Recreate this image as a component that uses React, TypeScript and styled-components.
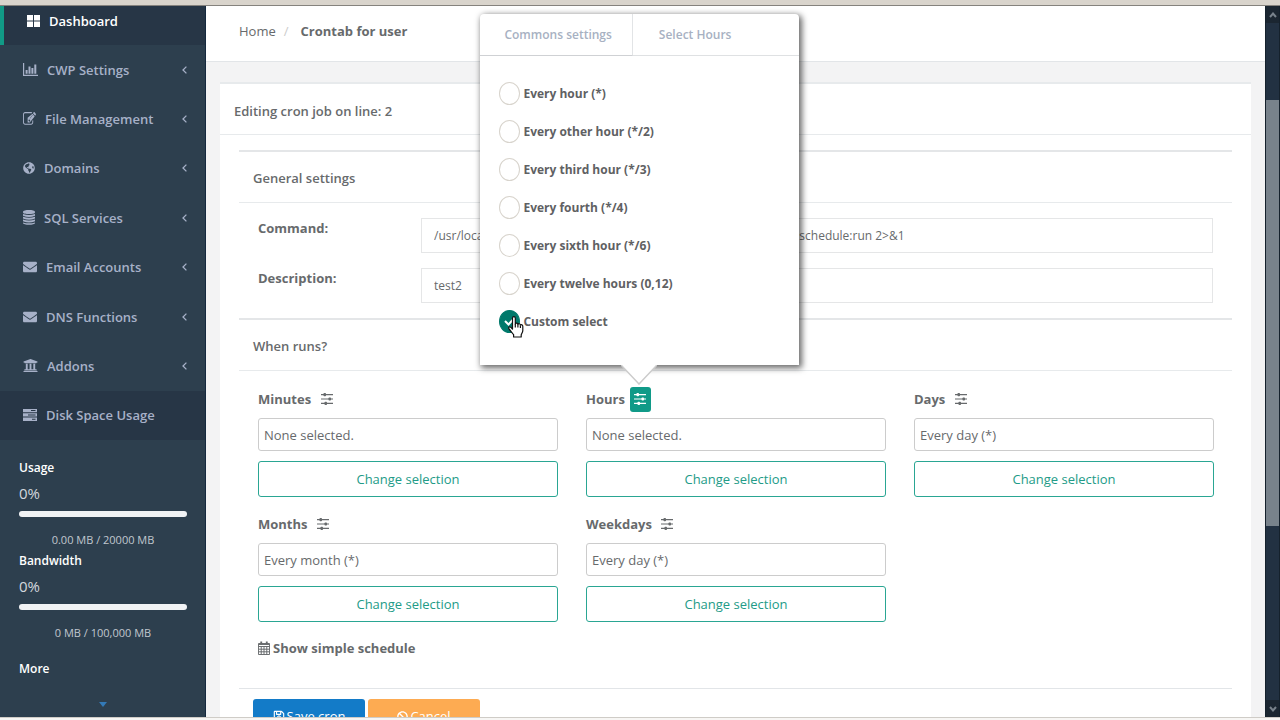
import React from "react";
import styled, { createGlobalStyle, css } from "styled-components";
import { FaEnvelope, FaUniversity, FaGlobeAmericas, FaBan, FaRegSave } from "react-icons/fa";

const GlobalStyle = createGlobalStyle`
  * { box-sizing: border-box; }
  body { margin: 0; }
  body, button, input {
    font-family: "Open Sans", "Noto Sans", sans-serif;
    font-size: 13px;
    color: #676a6c;
  }
`;

const Window = styled.div`
  display: flex;
  flex-direction: column;
  height: 100vh;
  overflow: hidden;
  background: #f3f3f4;
`;
const TopEdge = styled.div`
  flex: none;
  height: 6px;
  background: #d9d4cc;
  border-bottom: 1px solid #85827d;
`;
const BottomEdge = styled.div`
  flex: none;
  position: relative;
  height: 3px;
  background: #f7f6f4;
  border-top: 1px solid #cfccc7;
`;
const Viewport = styled.div`
  display: flex;
  flex: 1;
  min-height: 0;
  overflow: hidden;
`;

/* Sidebar */
const Sidebar = styled.aside`
  flex: none;
  width: 206px;
  overflow: hidden;
  background: #2d3f4e;
  border-right: 1px solid #15293e;
`;
const Nav = styled.nav`
  display: grid;
  grid-template-rows: 39px;
  grid-auto-rows: 1fr;
  height: 434px;
`;
const NavLink = styled.a<{ $state?: "active" | "shaded" }>`
  display: flex;
  align-items: center;
  gap: 9px;
  padding: 0 18px 0 23px;
  color: #a7b1c8;
  font-weight: 600;
  text-decoration: none;
  svg { flex: none; }
  ${(p) => p.$state && css`background: #273646;`}
  ${(p) => p.$state === "active" && css`
    color: #fff;
    border-left: 4px solid #119a86;
    padding-bottom: 10px;
  `}
`;
const NavText = styled.span`
  flex: 1;
  white-space: nowrap;
`;
const Quota = styled.section`
  padding: 17px 18px 0 19px;
  & + & { padding-top: 0; }
`;
const QuotaTitle = styled.h4`
  margin: 0;
  font-size: 12px;
  line-height: 22px;
  font-weight: 600;
  color: #fff;
`;
const QuotaValue = styled.div`
  font-size: 15px;
  line-height: 28px;
  color: #d2d7dd;
`;
const Meter = styled.div`
  height: 6px;
  margin: 4px 0 13px;
  border-radius: 3px;
  background: #f1f3f5;
`;
const QuotaDetail = styled.div`
  font-size: 11px;
  line-height: 20px;
  text-align: center;
  color: #c0c7cf;
`;
const More = styled.div`
  padding: 15px 18px 0 19px;
`;
const MoreCaret = styled.button`
  display: block;
  margin: 22px auto 0;
  padding: 0;
  border: 0;
  background: none;
  line-height: 0;
`;

/* Main column */
const Main = styled.main`
  flex: 1;
  min-width: 0;
`;
const PageHead = styled.header`
  height: 56px;
  padding: 15px 33px 0;
  background: #fff;
  border-bottom: 1px solid #e2e5e8;
`;
const Crumbs = styled.ol`
  display: flex;
  margin: 0;
  padding: 0;
  list-style: none;
  line-height: 20px;
  a { color: inherit; text-decoration: none; }
  li + li::before { content: "/"; padding: 0 12px 0 8px; color: #ccc; font-weight: 400; }
`;
const Current = styled.li`
  font-weight: 700;
`;
const Card = styled.section`
  margin: 20px 14px 0;
  background: #fff;
  border-top: 2px solid #e7eaec;
`;
const CardTitle = styled.h2`
  margin: 0;
  padding: 4px 14px 0;
  font-size: 13px;
  line-height: 46px;
  font-weight: 600;
  border-bottom: 1px solid #e7eaec;
`;
const CardBody = styled.form`
  padding: 15px 19px 0;
`;
const SectionTitle = styled.h3`
  margin: 0;
  padding: 2px 14px 0;
  font-size: 13px;
  line-height: 48px;
  font-weight: 600;
  border-top: 2px solid #e4e6e8;
  border-bottom: 1px solid #e7eaec;
`;
const Fields = styled.div`
  display: grid;
  gap: 15px;
  padding: 15px 19px;
`;
const FieldRow = styled.div`
  display: grid;
  grid-template-columns: 163px 1fr;
  label { font-weight: 700; line-height: 20px; }
`;
const TextInput = styled.input`
  width: 100%;
  height: 35px;
  padding: 0 12px;
  border: 1px solid #e5e6e7;
  background: #fff;
  font-size: 12px;
`;
const Schedule = styled.div`
  display: grid;
  grid-template-columns: repeat(3, 1fr);
  gap: 15px 28px;
  padding: 16px 18px 0 19px;
`;
const Unit = styled.div``;
const UnitHead = styled.div`
  display: flex;
  align-items: center;
  gap: 5px;
  height: 24px;
  font-weight: 700;
`;
const TunerSpot = styled.div`
  position: relative;
  display: flex;
`;
const Tuner = styled.button<{ $on?: boolean }>`
  display: flex;
  align-items: center;
  justify-content: center;
  width: 21px;
  height: 25px;
  padding: 0;
  border: 0;
  border-radius: 3px;
  background: ${(p) => (p.$on ? "#109a88" : "none")};
  color: ${(p) => (p.$on ? "#fff" : "#676a6c")};
`;
const Summary = styled.input`
  display: block;
  width: 100%;
  height: 33px;
  margin: 7px 0 10px;
  padding: 0 5px;
  border: 1px solid #ccc;
  border-radius: 3px;
  background: #fff;
`;
const ChangeButton = styled.button`
  display: block;
  width: 100%;
  height: 36px;
  border: 1px solid #2aa693;
  border-radius: 3px;
  background: #fff;
  color: #239b87;
`;
const SimpleLink = styled.a`
  display: flex;
  align-items: center;
  gap: 3px;
  margin: 16px 19px 30px;
  line-height: 20px;
  font-weight: 700;
  color: inherit;
  text-decoration: none;
`;
const Actions = styled.div`
  display: flex;
  gap: 3px;
  padding: 10px 14px;
  border-top: 1px solid #e2e5e8;
`;
const ActionButton = styled.button<{ $tone: string }>`
  display: flex;
  align-items: center;
  justify-content: center;
  gap: 2px;
  width: 112px;
  height: 34px;
  padding: 0;
  border: 0;
  border-radius: 3px;
  background: ${(p) => p.$tone};
  color: #fff;
`;

/* Popover */
const Popover = styled.div`
  position: absolute;
  z-index: 2;
  left: 50%;
  bottom: 47px;
  width: 319px;
  height: 351px;
  margin-left: -160px;
  border-radius: 4px 4px 0 0;
  background: #fff;
  box-shadow: 2px 2px 6px 1px rgba(0, 0, 0, 0.6);
  font-size: 12px;
`;
const Pointer = styled.svg`
  position: absolute;
  top: 100%;
  left: 141px;
`;
const Tabs = styled.div`
  display: flex;
  height: 42px;
  border-bottom: 1px solid #dfe1e3;
`;
const Tab = styled.button<{ $on?: boolean }>`
  padding: 0 26px;
  border: 0;
  background: none;
  color: #a7b1c2;
  font-size: 12px;
  font-weight: 600;
  ${(p) => p.$on && css`
    height: 42px;
    padding: 0 20px 0 24px;
    border-right: 1px solid #e2e4e6;
    border-bottom: 1px solid #cfd1d4;
  `}
`;
const Options = styled.div`
  display: grid;
  gap: 15px;
  padding: 26px 19px;
`;
const Option = styled.label`
  display: flex;
  align-items: center;
  gap: 3px;
  height: 23px;
  font-weight: 700;
  white-space: nowrap;
  color: #5f6163;
`;
const RadioBox = styled.span`
  position: relative;
  display: flex;
`;
const Radio = styled.input`
  appearance: none;
  width: 21px;
  height: 23px;
  margin: 0;
  border: 1px solid #d8d4cd;
  border-radius: 50%;
  background: #fff;
  &:checked { background: #00796b; border-color: #00796b; }
`;
const Tick = styled.svg`
  position: absolute;
  left: 5px;
  top: 7px;
`;
const Hand = styled.svg`
  position: absolute;
  left: 9px;
  top: 6px;
`;

/* Scroll bar of the window */
const ScrollTrack = styled.div`
  flex: none;
  display: flex;
  flex-direction: column;
  align-items: center;
  width: 15px;
  background: #223142;
  border-left: 1px solid #15212c;
  border-right: 1px solid #15212c;
`;
const ScrollEnd = styled.div`
  display: flex;
  align-items: center;
  justify-content: center;
  width: 100%;
  height: 17px;
  background: #1b2631;
`;
const ScrollSpace = styled.div<{ $grow: number }>`
  flex: ${(p) => p.$grow} 0 0;
`;
const ScrollThumb = styled.div`
  flex: 426 0 0;
  width: 100%;
  background: #78828b;
`;

const DashIcon = () => (
  <svg width="13" height="12" viewBox="0 0 13 12" fill="currentColor">
    <path d="M0 0h6v5.5H0zM7 0h6v5.5H7zM0 6.5h6V12H0zM7 6.5h6V12H7z" />
  </svg>
);
const ChartIcon = () => (
  <svg width="15" height="13" viewBox="0 0 15 13" fill="currentColor">
    <path d="M0 0h1.200v11.800H15V13H0zM2.600 7h2v3.800h-2zM5.500 3.500h2v7.300h-2zM8.400 5h2v5.800h-2zM11.300 1.500h2v9.300h-2z" />
  </svg>
);
const EditIcon = () => (
  <svg width="13" height="14" viewBox="0 128 1792 1536" fill="currentColor" preserveAspectRatio="none">
    <path d="M888 1184l116-116-152-152-116 116v56h96v96h56zm440-720q-16-16-33 1l-350 350q-17 17-1 33t33-1l350-350q17-17 1-33zm80 594v190q0 119-84.500 203.500T1120 1536H288q-119 0-203.500-84.500T0 1248V416q0-119 84.500-203.500T288 128h832q63 0 117 25 15 7 18 23 3 17-9 29l-49 49q-14 14-32 8-23-6-45-6H288q-66 0-113 47t-47 113v832q0 66 47 113t113 47h832q66 0 113-47t47-113v-126q0-13 9-22l64-64q15-15 35-7t20 29zm-96-738l288 288-672 672H640V768zm444 132l-92 92-288-288 92-92q28-28 68-28t68 28l152 152q28 28 28 68t-28 68z" />
  </svg>
);
const DatabaseIcon = () => (
  <svg width="12" height="15" viewBox="0 0 12 15" fill="currentColor">
    <path d="M0 2C0-.6 12-.6 12 2v.6c0 2-12 2-12 0zM0 4q6 1.800 12 0v1.700q-6 2.600-12 0zM0 6.800q6 1.800 12 0v1.700q-6 2.600-12 0zM0 9.600q6 1.800 12 0v1.700q-6 2.600-12 0zM0 12.400q6 1.800 12 0v.6c0 2.400-12 2.400-12 0z" />
  </svg>
);
const ServerIcon = () => (
  <svg width="14" height="12" viewBox="0 0 14 12" fill="currentColor">
    <path fillRule="evenodd" d="M0 0h14v3.300H0zM8 1.100v1h4.500v-1zM0 4.300h14v3.300H0zM5 5.400v1h7.500v-1zM0 8.600h14V12H0zM9 9.800v1h3.500v-1z" />
  </svg>
);
const ChevronIcon = () => (
  <svg width="5" height="8" viewBox="0 0 5 8" fill="none" stroke="currentColor" strokeWidth="1.300">
    <path d="M4.400 .6L1 4l3.400 3.400" />
  </svg>
);
const TuneIcon = () => (
  <svg width="12" height="12" viewBox="0 0 12 12" fill="currentColor">
    <path d="M0 1h12v1.200H0zM0 5.400h12v1.200H0zM0 9.800h12V11H0z" />
    <rect x="2.500" y="0" width="2.500" height="3.200" rx=".8" />
    <rect x="7.500" y="4.400" width="2.500" height="3.200" rx=".8" />
    <rect x="3.500" y="8.800" width="2.500" height="3.200" rx=".8" />
  </svg>
);
const CalendarIcon = () => (
  <svg width="12" height="14" viewBox="0 0 13 14" fill="none" stroke="currentColor" preserveAspectRatio="none">
    <path d="M.5 2.500h12v11H.5zM.5 5.500h12M.5 8.200h12M.5 10.800h12M3.500 5.500v8M6.500 5.500v8M9.500 5.500v8" />
    <path d="M.5 3.500h12" />
    <path d="M3.500 .5v3M9.500 .5v3" strokeWidth="2" />
  </svg>
);

const menu = [
  { text: "CWP Settings", icon: <ChartIcon /> },
  { text: "File Management", icon: <EditIcon /> },
  { text: "Domains", icon: <FaGlobeAmericas size={12} /> },
  { text: "SQL Services", icon: <DatabaseIcon /> },
  { text: "Email Accounts", icon: <FaEnvelope size={14} /> },
  { text: "DNS Functions", icon: <FaEnvelope size={14} /> },
  { text: "Addons", icon: <FaUniversity size={15} /> },
];

const quotas = [
  { title: "Usage", detail: "0.00 MB / 20000 MB" },
  { title: "Bandwidth", detail: "0 MB / 100,000 MB" },
];

const units = [
  { name: "Minutes", value: "None selected." },
  { name: "Hours", value: "None selected.", open: true },
  { name: "Days", value: "Every day (*)" },
  { name: "Months", value: "Every month (*)" },
  { name: "Weekdays", value: "Every day (*)" },
];

const choices = [
  "Every hour (*)",
  "Every other hour (*/2)",
  "Every third hour (*/3)",
  "Every fourth (*/4)",
  "Every sixth hour (*/6)",
  "Every twelve hours (0,12)",
  "Custom select",
];

function HoursPopover() {
  return (
    <Popover role="dialog" aria-label="Hours">
      <Tabs role="tablist">
        <Tab type="button" role="tab" aria-selected $on>Commons settings</Tab>
        <Tab type="button" role="tab" aria-selected={false}>Select Hours</Tab>
      </Tabs>
      <Options>
        {choices.map((text) => {
          const picked = text === "Custom select";
          return (
            <Option key={text}>
              <RadioBox>
                <Radio type="radio" name="hours" defaultChecked={picked} />
                {picked && (
                  <>
                    <Tick width="11" height="9" viewBox="0 0 11 9" fill="none" stroke="#fff" strokeWidth="2">
                      <path d="M1 4l3.500 3.500L10 1.500" />
                    </Tick>
                    <Hand width="16" height="22" viewBox="0 0 16 22" fill="#fff" stroke="#111" strokeWidth="1.200" strokeLinejoin="round">
                      <path d="M4.500 13V2.200c0-2 2.800-2 2.800 0V8c.3-1.400 2.600-1.200 2.600.4.500-1.200 2.500-.9 2.500.8.600-.9 2.400-.5 2.400 1.200v4c0 2-1.300 3-1.600 4.500V21H5.600v-2.300C4.500 17 2 14.500.9 12.600c-.8-1.500.9-2.400 2-1.300z" />
                      <path d="M7.300 8v3.500M9.900 8.500v3M12.400 9.500v2.500" fill="none" />
                    </Hand>
                  </>
                )}
              </RadioBox>
              {text}
            </Option>
          );
        })}
      </Options>
      <Pointer width="36" height="20" viewBox="0 0 36 20">
        <path d="M0 0h36L18 19z" fill="#fff" />
        <path d="M0 0l18 19L36 0" fill="none" stroke="#ccc" strokeWidth="1.500" />
      </Pointer>
    </Popover>
  );
}

export default function App() {
  return (
    <Window>
      <GlobalStyle />
      <TopEdge />
      <Viewport>
        <Sidebar>
          <Nav>
            <NavLink href="#dashboard" $state="active">
              <DashIcon />
              <NavText>Dashboard</NavText>
            </NavLink>
            {menu.map((m) => (
              <NavLink key={m.text} href="#menu">
                {m.icon}
                <NavText>{m.text}</NavText>
                <ChevronIcon />
              </NavLink>
            ))}
            <NavLink href="#disk" $state="shaded">
              <ServerIcon />
              <NavText>Disk Space Usage</NavText>
            </NavLink>
          </Nav>
          {quotas.map((q) => (
            <Quota key={q.title}>
              <QuotaTitle>{q.title}</QuotaTitle>
              <QuotaValue>0%</QuotaValue>
              <Meter />
              <QuotaDetail>{q.detail}</QuotaDetail>
            </Quota>
          ))}
          <More>
            <QuotaTitle>More</QuotaTitle>
          </More>
          <MoreCaret type="button" aria-label="Show more">
            <svg width="8" height="5" viewBox="0 0 8 5"><path d="M0 0h8L4 5z" fill="#337ab7" /></svg>
          </MoreCaret>
        </Sidebar>

        <Main>
          <PageHead>
            <Crumbs>
              <li><a href="#home">Home</a></li>
              <Current>Crontab for user</Current>
            </Crumbs>
          </PageHead>
          <Card>
            <CardTitle>Editing cron job on line: 2</CardTitle>
            <CardBody>
              <SectionTitle>General settings</SectionTitle>
              <Fields>
                <FieldRow>
                  <label htmlFor="command">Command:</label>
                  <TextInput id="command" defaultValue="/usr/local/bin/php /home/laravel/public_html/cron/portal/artisan schedule:run 2>&1" />
                </FieldRow>
                <FieldRow>
                  <label htmlFor="description">Description:</label>
                  <TextInput id="description" defaultValue="test2" />
                </FieldRow>
              </Fields>
              <SectionTitle>When runs?</SectionTitle>
              <Schedule>
                {units.map((u) => (
                  <Unit key={u.name}>
                    <UnitHead>
                      <label htmlFor={u.name}>{u.name}</label>
                      <TunerSpot>
                        <Tuner type="button" aria-label={`${u.name} options`} $on={u.open}>
                          <TuneIcon />
                        </Tuner>
                        {u.open && <HoursPopover />}
                      </TunerSpot>
                    </UnitHead>
                    <Summary id={u.name} readOnly value={u.value} />
                    <ChangeButton type="button">Change selection</ChangeButton>
                  </Unit>
                ))}
              </Schedule>
              <SimpleLink href="#simple">
                <CalendarIcon />
                Show simple schedule
              </SimpleLink>
              <Actions>
                <ActionButton type="button" $tone="#137bc8"><FaRegSave size={12} />Save cron</ActionButton>
                <ActionButton type="button" $tone="#fdab52"><FaBan size={11} />Cancel</ActionButton>
              </Actions>
            </CardBody>
          </Card>
        </Main>

        <ScrollTrack>
          <ScrollEnd>
            <svg width="8" height="6" viewBox="0 0 8 6" fill="none" stroke="#78828b" strokeWidth="2"><path d="M1 5l3-3.500L7 5" /></svg>
          </ScrollEnd>
          <ScrollSpace $grow={77} />
          <ScrollThumb />
          <ScrollSpace $grow={174} />
          <ScrollEnd>
            <svg width="8" height="6" viewBox="0 0 8 6" fill="none" stroke="#78828b" strokeWidth="2"><path d="M1 1l3 3.500L7 1" /></svg>
          </ScrollEnd>
        </ScrollTrack>
      </Viewport>
      <BottomEdge />
    </Window>
  );
}
